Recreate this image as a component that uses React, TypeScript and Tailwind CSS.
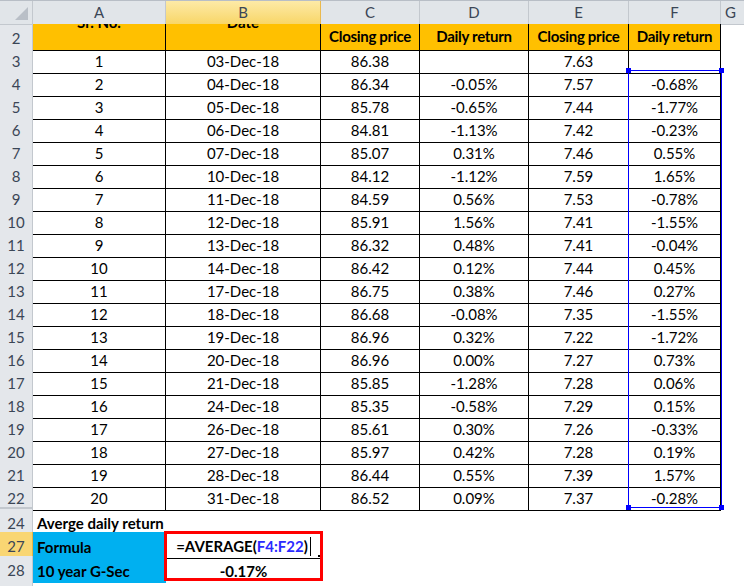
import React from 'react';

// Excel 2010 style sheet: daily returns with average formula
const rows: [string, string, string, string, string, string][] = [
  ['1', '03-Dec-18', '86.38', '', '7.63', ''],
  ['2', '04-Dec-18', '86.34', '-0.05%', '7.57', '-0.68%'],
  ['3', '05-Dec-18', '85.78', '-0.65%', '7.44', '-1.77%'],
  ['4', '06-Dec-18', '84.81', '-1.13%', '7.42', '-0.23%'],
  ['5', '07-Dec-18', '85.07', '0.31%', '7.46', '0.55%'],
  ['6', '10-Dec-18', '84.12', '-1.12%', '7.59', '1.65%'],
  ['7', '11-Dec-18', '84.59', '0.56%', '7.53', '-0.78%'],
  ['8', '12-Dec-18', '85.91', '1.56%', '7.41', '-1.55%'],
  ['9', '13-Dec-18', '86.32', '0.48%', '7.41', '-0.04%'],
  ['10', '14-Dec-18', '86.42', '0.12%', '7.44', '0.45%'],
  ['11', '17-Dec-18', '86.75', '0.38%', '7.46', '0.27%'],
  ['12', '18-Dec-18', '86.68', '-0.08%', '7.35', '-1.55%'],
  ['13', '19-Dec-18', '86.96', '0.32%', '7.22', '-1.72%'],
  ['14', '20-Dec-18', '86.96', '0.00%', '7.27', '0.73%'],
  ['15', '21-Dec-18', '85.85', '-1.28%', '7.28', '0.06%'],
  ['16', '24-Dec-18', '85.35', '-0.58%', '7.29', '0.15%'],
  ['17', '26-Dec-18', '85.61', '0.30%', '7.26', '-0.33%'],
  ['18', '27-Dec-18', '85.97', '0.42%', '7.28', '0.19%'],
  ['19', '28-Dec-18', '86.44', '0.55%', '7.39', '1.57%'],
  ['20', '31-Dec-18', '86.52', '0.09%', '7.37', '-0.28%'],
];

const grid = 'grid grid-cols-[33px_133px_155px_99px_109px_100px_92px_1fr]';
const rowHead =
  'flex items-center justify-center bg-[#e4e7eb] border-r border-b border-[#c3c8ce] text-[#3b4656] text-[15px]';

function ColHead({ label, active }: { label: string; active?: boolean }) {
  return (
    <div
      className={
        active
          ? 'flex items-center justify-center border-r border-b border-[#eab94e] bg-gradient-to-b from-[#fdeaa6] to-[#f8d666] text-[#3b4656] text-[15px]'
          : 'flex items-center justify-center border-r border-b border-[#c3c8ce] bg-[#e1e5e9] text-[#3b4656] text-[15px]'
      }
    >
      {label}
    </div>
  );
}

export default function App() {
  return (
    <div className="relative w-[744px] h-[586px] overflow-hidden bg-white font-['Lato',sans-serif] text-black">
      {/* column headers */}
      <div className={`${grid} h-[24px] border-t border-[#b8bec6]`}>
        <div className="relative bg-[#e1e5e9] border-r border-b border-[#c3c8ce]">
          <div className="absolute right-[4px] bottom-[4px] w-0 h-0 border-l-[13px] border-l-transparent border-b-[13px] border-b-[#b9bfc7]" />
        </div>
        <ColHead label="A" />
        <ColHead label="B" active />
        <ColHead label="C" />
        <ColHead label="D" />
        <ColHead label="E" />
        <ColHead label="F" />
        <div className="flex items-center pl-[4px] bg-[#e1e5e9] border-b border-[#c3c8ce] text-[#3b4656] text-[15px]">G</div>
      </div>

      {/* row 2: table header */}
      <div className={`${grid} h-[23px]`}>
        <div className={`${rowHead} pt-[3px]`}>2</div>
        <div className="overflow-hidden bg-[#ffc000] border-r border-b border-black text-center font-bold text-[15px] leading-[15px] -mt-0">
          <div className="-mt-[9px]">Sr. No.</div>
        </div>
        <div className="overflow-hidden bg-[#ffc000] border-r border-b border-black text-center font-bold text-[15px] leading-[15px]">
          <div className="-mt-[9px]">Date</div>
        </div>
        {['Closing price', 'Daily return', 'Closing price', 'Daily return'].map((h, i) => (
          <div
            key={i}
            className="flex items-end justify-center pb-[2px] bg-[#ffc000] border-r border-b border-black font-bold text-[15px] tracking-[-0.3px] whitespace-nowrap"
          >
            {h}
          </div>
        ))}
        <div />
      </div>

      {/* data rows 3-22 */}
      {rows.map((r, i) => (
        <div key={i} className={`${grid} h-[23px]`}>
          <div className={`${rowHead} pt-[3px]`}>{i + 3}</div>
          {r.map((v, j) => (
            <div key={j} className="flex items-center justify-center pt-[3px] border-r border-b border-black text-[15px]">
              {v}
            </div>
          ))}
          <div />
        </div>
      ))}

      {/* row 24 */}
      <div className={`${grid} h-[25px]`}>
        <div className={`${rowHead} pt-[3px] border-t-2 border-t-[#c3c8ce]`}>24</div>
        <div className="flex items-center pl-[4px] pt-[3px] font-bold text-[15px] whitespace-nowrap">Averge daily return</div>
      </div>

      {/* row 27 */}
      <div className={`${grid} h-[24px]`}>
        <div className="flex items-center justify-center pt-[3px] bg-[#f9d673] border-r border-b border-[#e5b347] text-[#3b4656] text-[15px]">
          27
        </div>
        <div className="flex items-center pl-[4px] pt-[3px] bg-[#00b0f0] font-bold text-[15px]">Formula</div>
        <div className="relative flex items-center justify-center pt-[3px] border-b border-black font-bold text-[15px]">
          <span>
            =AVERAGE(<span className="text-[#2b2bff]">F4:F22</span>)
          </span>
          <span className="ml-[2px] w-px h-[19px] bg-black" />
          <span className="absolute right-[0px] bottom-[1px] w-[3px] h-[2px] bg-black" />
        </div>
      </div>

      {/* row 28 */}
      <div className={`${grid} h-[23px]`}>
        <div className={`${rowHead} pt-[3px]`}>28</div>
        <div className="flex items-center pl-[4px] pt-[3px] bg-[#00b0f0] font-bold text-[15px]">10 year G-Sec</div>
        <div className="flex items-center justify-center pt-[3px] font-bold text-[15px]">-0.17%</div>
      </div>

      {/* row 29 (cut off) */}
      <div className={`${grid} h-[23px]`}>
        <div className={`${rowHead} pt-[3px]`}>29</div>
      </div>

      {/* formula reference highlight on F4:F22 */}
      <div className="absolute left-[628px] top-[70px] w-[94px] h-[438px] border border-[#0000ff] pointer-events-none">
        <span className="absolute -left-[3px] -top-[3px] w-[5px] h-[5px] bg-[#0000ff]" />
        <span className="absolute -right-[3px] -top-[3px] w-[5px] h-[5px] bg-[#0000ff]" />
        <span className="absolute -left-[3px] -bottom-[3px] w-[5px] h-[5px] bg-[#0000ff]" />
        <span className="absolute -right-[3px] -bottom-[3px] w-[5px] h-[5px] bg-[#0000ff]" />
      </div>

      {/* red callout box around the result */}
      <div className="absolute left-[164px] top-[531px] w-[159px] h-[50px] border-[3px] border-[#ff0000] pointer-events-none" />
    </div>
  );
}
